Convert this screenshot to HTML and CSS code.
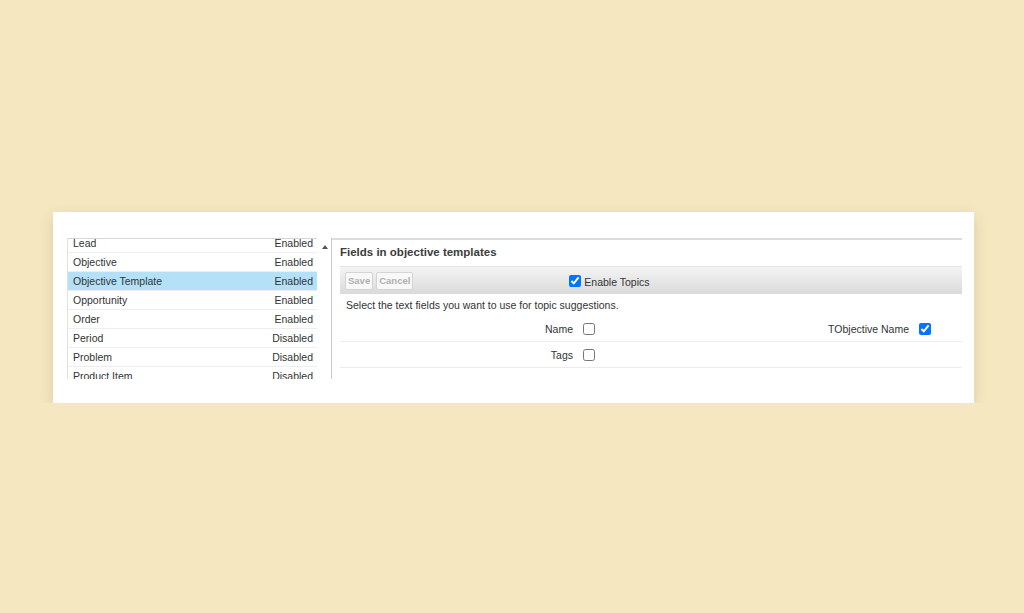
FILE: index.html
```html
<!DOCTYPE html>
<html lang="en">
<head>
    <meta charset="UTF-8">
    <title>Topic settings</title>
    <link rel="stylesheet" href="styles.css">
</head>
<body>
    <div class="card">
        <div class="entity-list">
            <div class="rows">
                <div class="row"><span>Lead</span><span>Enabled</span></div>
                <div class="row"><span>Objective</span><span>Enabled</span></div>
                <div class="row selected"><span>Objective Template</span><span>Enabled</span></div>
                <div class="row"><span>Opportunity</span><span>Enabled</span></div>
                <div class="row"><span>Order</span><span>Enabled</span></div>
                <div class="row"><span>Period</span><span>Disabled</span></div>
                <div class="row"><span>Problem</span><span>Disabled</span></div>
                <div class="row"><span>Product Item</span><span>Disabled</span></div>
            </div>
        </div>
        <div class="scrollbar"><span class="arrow-up"></span></div>

        <div class="fields">
            <div class="fields-title">Fields in objective templates</div>
            <div class="toolbar">
                <button class="btn">Save</button>
                <button class="btn">Cancel</button>
                <label class="enable"><input type="checkbox" checked><span>Enable Topics</span></label>
            </div>
            <div class="hint">Select the text fields you want to use for topic suggestions.</div>
            <div class="field-row">
                <div class="field"><span>Name</span><input type="checkbox"></div>
                <div class="field right"><span>TObjective Name</span><input type="checkbox" checked></div>
            </div>
            <div class="field-row">
                <div class="field"><span>Tags</span><input type="checkbox"></div>
            </div>
        </div>
    </div>
</body>
</html>
```

FILE: styles.css
```css
body {
    margin: 0;
    background: #f5e8c1;
    font-family: "Liberation Sans", Arial, sans-serif;
    font-size: 10.5px;
    color: #333;
}
.card {
    margin: 212px 0 0 53px;
    width: 921px;
    height: 191px;
    box-sizing: border-box;
    padding: 26px 12px 0 14px;
    background: #fff;
    box-shadow: 0 4px 14px rgba(0, 0, 0, 0.12);
    display: flex;
    align-items: flex-start;
}
.entity-list {
    width: 250px;
    height: 141px;
    overflow: hidden;
    border-top: 1px solid #d6d6d6;
    border-left: 1px solid #e2e2e2;
    box-sizing: border-box;
}
.rows {
    margin-top: -5px;
}
.row {
    display: flex;
    justify-content: space-between;
    height: 19px;
    line-height: 19px;
    padding: 0 4px 0 5px;
    border-bottom: 1px solid #eeeeee;
    box-sizing: border-box;
}
.row.selected {
    background: #b4e1f8;
}
.scrollbar {
    width: 15px;
    height: 141px;
    box-sizing: border-box;
    border-right: 1px solid #c8c8c8;
    position: relative;
}
.arrow-up {
    position: absolute;
    left: 5px;
    top: 7px;
    width: 0;
    height: 0;
    border-left: 3px solid transparent;
    border-right: 3px solid transparent;
    border-bottom: 4px solid #555;
}
.fields {
    flex: 1;
    height: 141px;
    border-top: 2px solid #dcdcdc;
    box-sizing: border-box;
    padding-left: 8px;
}
.fields-title {
    height: 26px;
    line-height: 24px;
    font-size: 11.5px;
    font-weight: bold;
    color: #3c3c3c;
    border-bottom: 1px solid #e4e4e4;
}
.toolbar {
    height: 27px;
    display: flex;
    align-items: center;
    padding-left: 5px;
    background: linear-gradient(#f4f4f4, #dadada);
}
.btn {
    font-family: "Liberation Sans", Arial, sans-serif;
    font-size: 9.5px;
    font-weight: bold;
    color: #b0b0b0;
    background: #f8f8f8;
    border: 1px solid #d4d4d4;
    border-radius: 2px;
    height: 18px;
    padding: 0 2px;
    margin-right: 3px;
}
.enable {
    margin-left: 153px;
    display: flex;
    align-items: center;
    color: #333;
}
.enable input {
    margin: 0 3px 0 0;
    width: 12px;
    height: 12px;
}
.enable span {
    padding-top: 3px;
}
.hint {
    padding: 5px 0 0 6px;
    height: 17px;
}
.field-row {
    display: flex;
    height: 25px;
    align-items: center;
    border-bottom: 1px solid #ececec;
}
.field {
    width: 255px;
    display: flex;
    align-items: center;
    justify-content: flex-end;
}
.field.right {
    width: 336px;
}
.field span {
    margin-right: 10px;
}
.field input {
    margin: 0;
    width: 12px;
    height: 12px;
}
```
